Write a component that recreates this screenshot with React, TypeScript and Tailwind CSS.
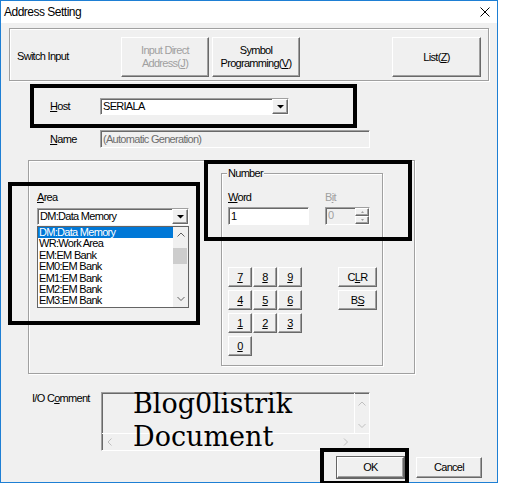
import type { ReactNode } from "react";

const raised =
  "bg-[#f0f0f0] border border-t-white border-l-white border-r-[#696969] border-b-[#696969] shadow-[inset_-1px_-1px_0_#a0a0a0]";
const sunken =
  "border border-t-[#a0a0a0] border-l-[#a0a0a0] border-r-white border-b-white shadow-[inset_1px_1px_0_#696969]";
const etched = "border border-[#a0a0a0] shadow-[inset_1px_1px_0_#fff,1px_1px_0_#fff]";

const areaItems = [
  "DM:Data Memory",
  "WR:Work Area",
  "EM:EM Bank",
  "EM0:EM Bank",
  "EM1:EM Bank",
  "EM2:EM Bank",
  "EM3:EM Bank",
];

// underlined access key letter
const Mn = ({ children }: { children: ReactNode }) => (
  <span className="underline underline-offset-[1px]">{children}</span>
);

const DownArrow = () => (
  <svg width="7" height="4" viewBox="0 0 7 4">
    <polygon points="0,0 7,0 3.5,3.5" fill="#000" />
  </svg>
);

const Chevron = ({ dir, color }: { dir: "up" | "down" | "left" | "right"; color: string }) => {
  const d = {
    up: "M0.5 4.5 L4 1 L7.5 4.5",
    down: "M0.5 1 L4 4.5 L7.5 1",
    left: "M4.5 0.5 L1 4 L4.5 7.5",
    right: "M1 0.5 L4.5 4 L1 7.5",
  }[dir];
  const horiz = dir === "left" || dir === "right";
  return (
    <svg width={horiz ? 6 : 8} height={horiz ? 8 : 6} viewBox={horiz ? "0 0 6 8" : "0 0 8 6"}>
      <path d={d} stroke={color} strokeWidth="1" fill="none" />
    </svg>
  );
};

const ComboButton = () => (
  <div className={`flex w-[16px] shrink-0 items-center justify-center ${raised}`}>
    <DownArrow />
  </div>
);

const Key = ({ children, w = "w-[24px]" }: { children: ReactNode; w?: string }) => (
  <div className={`flex h-[20px] items-center justify-center ${w} ${raised}`}>{children}</div>
);

export default function App() {
  return (
    <div className="relative h-[483px] w-[512px] overflow-hidden bg-white font-['Liberation_Sans',Arial,sans-serif] text-[11px] leading-[13px] tracking-[-0.7px] text-black">
      <div className="flex h-[483px] w-[498px] flex-col border border-[#1e7fd4]">
        {/* title bar */}
        <div className="flex h-[22px] shrink-0 items-center justify-between bg-white pl-[3px] pr-[7px]">
          <span className="text-[12px] tracking-[-0.5px]">Address Setting</span>
          <svg width="10" height="10" viewBox="0 0 10 10">
            <path d="M0.5 0.5 L9.5 9.5 M9.5 0.5 L0.5 9.5" stroke="#000" strokeWidth="1" />
          </svg>
        </div>

        <div className="flex flex-1 flex-col bg-[#f0f0f0]">
          {/* switch input */}
          <div className={`ml-[8px] mt-[5px] flex h-[53px] w-[480px] shrink-0 items-start pt-[8px] ${etched}`}>
            <span className="ml-[7px] mt-[13px] w-[104px]">Switch Input</span>
            <div className={`flex h-[40px] w-[88px] flex-col items-center justify-center text-center text-[#a0a0a0] ${raised}`}>
              <span>Input Direct</span>
              <span>
                Address(<Mn>J</Mn>)
              </span>
            </div>
            <div className={`ml-[3px] flex h-[40px] w-[88px] flex-col items-center justify-center text-center ${raised}`}>
              <span>Symbol</span>
              <span>
                Programming(<Mn>V</Mn>)
              </span>
            </div>
            <div className={`ml-auto mr-[7px] flex h-[40px] w-[89px] items-center justify-center ${raised}`}>
              List(<Mn>Z</Mn>)
            </div>
          </div>

          {/* host */}
          <div className="ml-[49px] mt-[17px] flex h-[17px] items-center">
            <span className="w-[50px]">
              <Mn>H</Mn>ost
            </span>
            <div className={`flex h-[17px] w-[189px] bg-white ${sunken}`}>
              <span className="flex-1 pl-[2px] leading-[14px]">SERIALA</span>
              <ComboButton />
            </div>
          </div>

          {/* name */}
          <div className="ml-[49px] mt-[15px] flex h-[18px] items-center">
            <span className="w-[50px]">
              <Mn>N</Mn>ame
            </span>
            <div className={`flex h-[18px] w-[270px] items-center pl-[2px] text-[#6d6d6d] ${sunken}`}>
              (Automatic Generation)
            </div>
          </div>

          {/* area + number panel */}
          <div className={`ml-[27px] mt-[12px] flex h-[214px] w-[387px] shrink-0 items-start ${etched}`}>
            <div className="ml-[8px] mt-[30px] flex w-[152px] flex-col">
              <span>
                <Mn>A</Mn>rea
              </span>
              <div className={`mt-[4px] flex h-[17px] bg-white ${sunken}`}>
                <span className="flex-1 pl-[2px] leading-[14px]">DM:Data Memory</span>
                <ComboButton />
              </div>
              <div className="mt-[1px] flex h-[82px] border border-[#646464] bg-white">
                <div className="flex flex-1 flex-col">
                  {areaItems.map((item, i) => (
                    <div
                      key={item}
                      className={`h-[11.4px] pl-[1px] leading-[11px] ${i === 0 ? "bg-[#0078d7] text-white" : ""}`}
                    >
                      {item}
                    </div>
                  ))}
                </div>
                <div className="flex w-[15px] flex-col bg-[#f0f0f0]">
                  <div className="flex h-[16px] items-center justify-center">
                    <Chevron dir="up" color="#606060" />
                  </div>
                  <div className="flex-1">
                    <div className="mt-[5px] h-[16px] w-[14px] bg-[#cdcdcd]" />
                  </div>
                  <div className="flex h-[16px] items-center justify-center">
                    <Chevron dir="down" color="#606060" />
                  </div>
                </div>
              </div>
            </div>

            {/* number group */}
            <div className={`relative ml-[32px] mt-[12px] flex h-[193px] w-[162px] flex-col pl-[6px] pt-[17px] ${etched}`}>
              <span className="absolute left-[5px] top-[-7px] bg-[#f0f0f0] px-[1px]">Number</span>
              <div className="flex">
                <div className="flex w-[81px] flex-col">
                  <span>
                    <Mn>W</Mn>ord
                  </span>
                  <div className={`mt-[3px] flex h-[18px] items-center bg-white pl-[2px] ${sunken}`}>1</div>
                </div>
                <div className="ml-[16px] flex w-[45px] flex-col text-[#a0a0a0]">
                  <span>
                    B<Mn>i</Mn>t
                  </span>
                  <div className={`mt-[3px] flex h-[18px] ${sunken}`}>
                    <span className="flex-1 pl-[2px] leading-[15px]">0</span>
                    <div className="flex w-[14px] flex-col">
                      <div className={`flex h-[8px] items-center justify-center ${raised}`}>
                        <svg width="3" height="2" viewBox="0 0 3 2">
                          <polygon points="0,2 3,2 1.5,0" fill="#a0a0a0" />
                        </svg>
                      </div>
                      <div className={`flex h-[8px] items-center justify-center ${raised}`}>
                        <svg width="3" height="2" viewBox="0 0 3 2">
                          <polygon points="0,0 3,0 1.5,2" fill="#a0a0a0" />
                        </svg>
                      </div>
                    </div>
                  </div>
                </div>
              </div>

              {/* keypad */}
              <div className="mt-[42px] flex items-start">
                <div className="grid grid-cols-[24px_24px_24px] gap-x-[1px] gap-y-[3px]">
                  {["7", "8", "9", "4", "5", "6", "1", "2", "3", "0"].map((k) => (
                    <Key key={k}>
                      <Mn>{k}</Mn>
                    </Key>
                  ))}
                </div>
                <div className="ml-[36px] flex flex-col gap-[3px]">
                  <Key w="w-[39px]">
                    C<Mn>L</Mn>R
                  </Key>
                  <Key w="w-[39px]">
                    B<Mn>S</Mn>
                  </Key>
                </div>
              </div>
            </div>
          </div>

          {/* comment */}
          <div className="ml-[31px] mt-[18px] flex h-[59px] items-start">
            <span className="w-[69px]">
              I/O C<Mn>o</Mn>mment
            </span>
            <div className={`flex h-[59px] w-[269px] flex-col ${sunken}`}>
              <div className="flex flex-1">
                <div className="flex-1 border-b border-r border-white" />
                <div className="flex w-[14px] flex-col items-center justify-between border-b border-white pb-[4px] pt-[8px]">
                  <Chevron dir="up" color="#bfbfbf" />
                  <Chevron dir="down" color="#bfbfbf" />
                </div>
              </div>
              <div className="flex h-[16px] items-center pl-[5px] pr-[20px]">
                <Chevron dir="left" color="#bfbfbf" />
                <div className="flex-1" />
                <Chevron dir="right" color="#bfbfbf" />
              </div>
            </div>
          </div>

          {/* dialog buttons */}
          <div className="mt-[6px] flex justify-end gap-[12px] pr-[15px]">
            <div className={`flex h-[21px] w-[67px] items-center justify-center outline outline-[#646464] ${raised}`}>OK</div>
            <div className={`flex h-[21px] w-[66px] items-center justify-center ${raised}`}>Cancel</div>
          </div>
        </div>
      </div>

      {/* highlight frames and caption drawn over the dialog */}
      <div className="absolute left-[30px] top-[84px] h-[44px] w-[327px] border-4 border-black" />
      <div className="absolute left-[8px] top-[182px] h-[143px] w-[192px] border-4 border-black" />
      <div className="absolute left-[204px] top-[160px] h-[81px] w-[208px] border-4 border-black" />
      <div className="absolute left-[320px] top-[448px] h-[37px] w-[89px] border-4 border-black" />
      <div className="absolute left-[133px] top-[387px] font-['DejaVu_Serif',serif] text-[27px] leading-[33px] tracking-normal">
        <div>Blog0listrik</div>
        <div>Document</div>
      </div>
    </div>
  );
}
